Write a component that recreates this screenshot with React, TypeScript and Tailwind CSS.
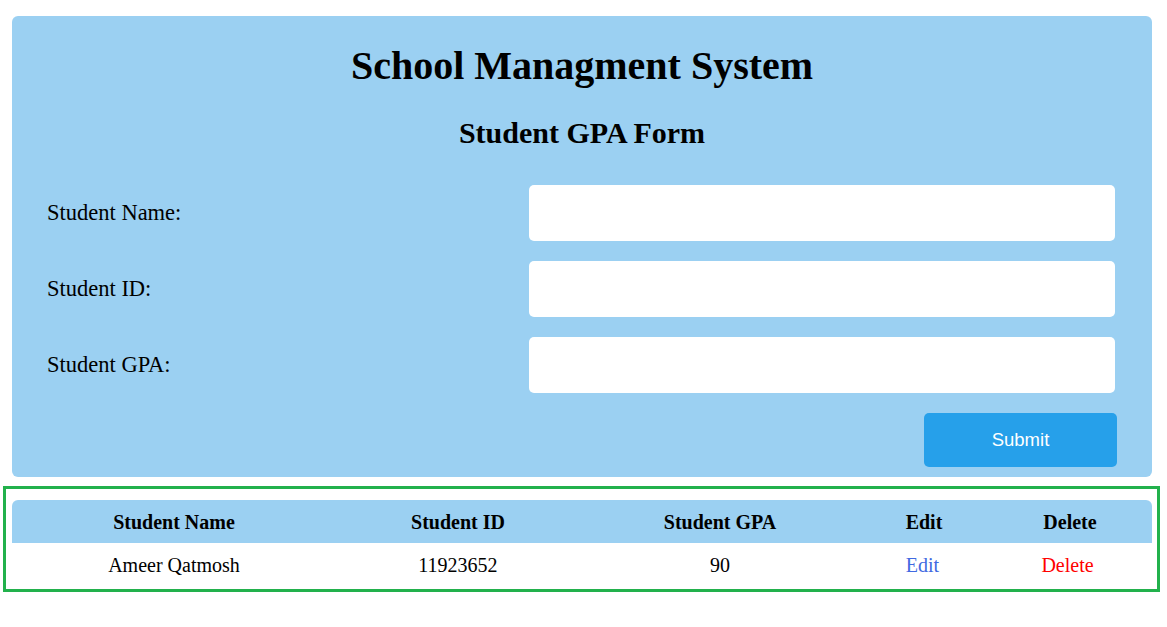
import { useState } from 'react'

const serif = { fontFamily: '"Liberation Serif", "Times New Roman", serif' }

type Student = { name: string; id: string; gpa: string }

export default function App() {
    const [students] = useState<Student[]>([
        { name: 'Ameer Qatmosh', id: '11923652', gpa: '90' }
    ])

    return (
        <div className="min-h-screen bg-white pt-[16px]" style={serif}>
            {/* Form card */}
            <div className="ml-[12px] w-[1140px] rounded-[6px] bg-[#9bd0f2] px-[35px] pt-[28px] pb-[10px]">
                <h1 className="text-center text-[40px] font-bold leading-[44px] text-black">School Managment System</h1>
                <h2 className="mt-[28px] text-center text-[30px] font-bold leading-[33px] text-black">Student GPA Form</h2>

                <div className="mt-[36px] flex flex-col gap-[20px]">
                    <FormRow label="Student Name:" />
                    <FormRow label="Student ID:" />
                    <FormRow label="Student GPA:" />
                </div>

                <div className="mt-[20px] flex justify-end">
                    <button
                        className="h-[54px] w-[193px] rounded-[5px] bg-[#26a0ea] text-[18.5px] text-white"
                        style={{ fontFamily: '"Liberation Sans", Arial, sans-serif' }}
                    >
                        Submit
                    </button>
                </div>
            </div>

            {/* Table */}
            <div className="ml-[3px] mt-[9px] w-[1157px] border-[3px] border-[#22b14c] pt-[11px] pl-[6px]">
                <div className="w-[1140px]">
                    <div className="grid h-[43px] grid-cols-[324px_244px_280px_128px_164px] items-center rounded-t-[6px] bg-[#9bd0f2] text-center text-[20px] font-bold text-black">
                        <div>Student Name</div>
                        <div>Student ID</div>
                        <div>Student GPA</div>
                        <div>Edit</div>
                        <div>Delete</div>
                    </div>
                    {students.map(s => (
                        <div key={s.id} className="grid h-[46px] grid-cols-[324px_244px_280px_128px_164px] items-center pb-[3px] text-center text-[20px] text-black">
                            <div>{s.name}</div>
                            <div>{s.id}</div>
                            <div>{s.gpa}</div>
                            <div className="pr-[3px] text-[#4169e1]">Edit</div>
                            <div className="pr-[5px] text-[#ff0000]">Delete</div>
                        </div>
                    ))}
                </div>
            </div>
        </div>
    )
}

function FormRow({ label }: { label: string }) {
    return (
        <div className="flex items-center justify-between">
            <label className="text-[22.5px] text-black">{label}</label>
            <input className="mr-[2px] h-[56px] w-[586px] rounded-[5px] bg-white outline-none" />
        </div>
    )
}
